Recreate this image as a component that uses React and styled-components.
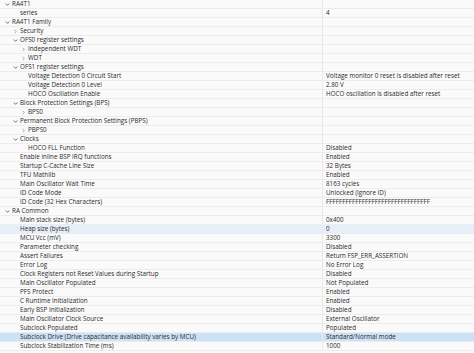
import React from "react";
import styled, { createGlobalStyle } from "styled-components";

const Global = createGlobalStyle`
  html, body { margin: 0; padding: 0; background: #fafafa; }
  body { font-family: "Open Sans", "Noto Sans", sans-serif; }
`;

const Table = styled.div`
  width: 474px;
  height: 353px;
  overflow: hidden;
  background: #fafafa;
  display: flex;
  flex-direction: column;
`;

const Row = styled.div`
  display: grid;
  grid-template-columns: 323px 1fr;
  height: 9px;
  flex: 0 0 9px;
  box-sizing: border-box;
  border-bottom: 1px solid #ececec;
  background: ${(p) => (p.$sel === 2 ? "#cce2f7" : p.$sel === 1 ? "#e6eff9" : "transparent")};
  font-size: 6.3px;
  line-height: 8px;
  color: #2a2a2a;
`;

const Label = styled.div`
  display: flex;
  align-items: center;
  padding-left: ${(p) => 12 + p.$level * 8}px;
  position: relative;
  white-space: nowrap;
  border-right: 1px solid #e8e8e8;
`;

const Value = styled.div`
  padding-left: 3px;
  display: flex;
  align-items: center;
  white-space: nowrap;
`;

const Chevron = styled.svg`
  position: absolute;
  left: ${(p) => 5 + p.$level * 8}px;
  top: 2px;
  width: 5px;
  height: 5px;
`;

const Arrow = ({ open, level }) => (
  <Chevron $level={level} viewBox="0 0 5 5">
    {open ? (
      <path d="M0.8 1.6 L2.5 3.3 L4.2 1.6" fill="none" stroke="#444" strokeWidth="0.8" />
    ) : (
      <path d="M1.6 0.8 L3.3 2.5 L1.6 4.2" fill="none" stroke="#888" strokeWidth="0.7" />
    )}
  </Chevron>
);

const rows = [
  [0, "RA4T1", "", "open"],
  [1, "series", "4"],
  [0, "RA4T1 Family", "", "open"],
  [1, "Security", "", "closed"],
  [1, "OFS0 register settings", "", "open"],
  [2, "Independent WDT", "", "closed"],
  [2, "WDT", "", "closed"],
  [1, "OFS1 register settings", "", "open"],
  [2, "Voltage Detection 0 Circuit Start", "Voltage monitor 0 reset is disabled after reset"],
  [2, "Voltage Detection 0 Level", "2.80 V"],
  [2, "HOCO Oscillation Enable", "HOCO oscillation is disabled after reset"],
  [1, "Block Protection Settings (BPS)", "", "open"],
  [2, "BPS0", "", "closed"],
  [1, "Permanent Block Protection Settings (PBPS)", "", "open"],
  [2, "PBPS0", "", "closed"],
  [1, "Clocks", "", "open"],
  [2, "HOCO FLL Function", "Disabled"],
  [1, "Enable inline BSP IRQ functions", "Enabled"],
  [1, "Startup C-Cache Line Size", "32 Bytes"],
  [1, "TFU Mathlib", "Enabled"],
  [1, "Main Oscillator Wait Time", "8163 cycles"],
  [1, "ID Code Mode", "Unlocked (Ignore ID)"],
  [1, "ID Code (32 Hex Characters)", "FFFFFFFFFFFFFFFFFFFFFFFFFFFFFFFF"],
  [0, "RA Common", "", "open"],
  [1, "Main stack size (bytes)", "0x400"],
  [1, "Heap size (bytes)", "0", null, 1],
  [1, "MCU Vcc (mV)", "3300"],
  [1, "Parameter checking", "Disabled"],
  [1, "Assert Failures", "Return FSP_ERR_ASSERTION"],
  [1, "Error Log", "No Error Log"],
  [1, "Clock Registers not Reset Values during Startup", "Disabled"],
  [1, "Main Oscillator Populated", "Not Populated"],
  [1, "PFS Protect", "Enabled"],
  [1, "C Runtime Initialization", "Enabled"],
  [1, "Early BSP Initialization", "Disabled"],
  [1, "Main Oscillator Clock Source", "External Oscillator"],
  [1, "Subclock Populated", "Populated"],
  [1, "Subclock Drive (Drive capacitance availability varies by MCU)", "Standard/Normal mode", null, 2],
  [1, "Subclock Stabilization Time (ms)", "1000"],
];

export default function App() {
  return (
    <>
      <Global />
      <Table>
        {rows.map(([level, label, value, arrow, sel], i) => (
          <Row key={i} $sel={sel || 0}>
            <Label $level={level}>
              {arrow && <Arrow open={arrow === "open"} level={level} />}
              {label}
            </Label>
            <Value>{value}</Value>
          </Row>
        ))}
      </Table>
    </>
  );
}
